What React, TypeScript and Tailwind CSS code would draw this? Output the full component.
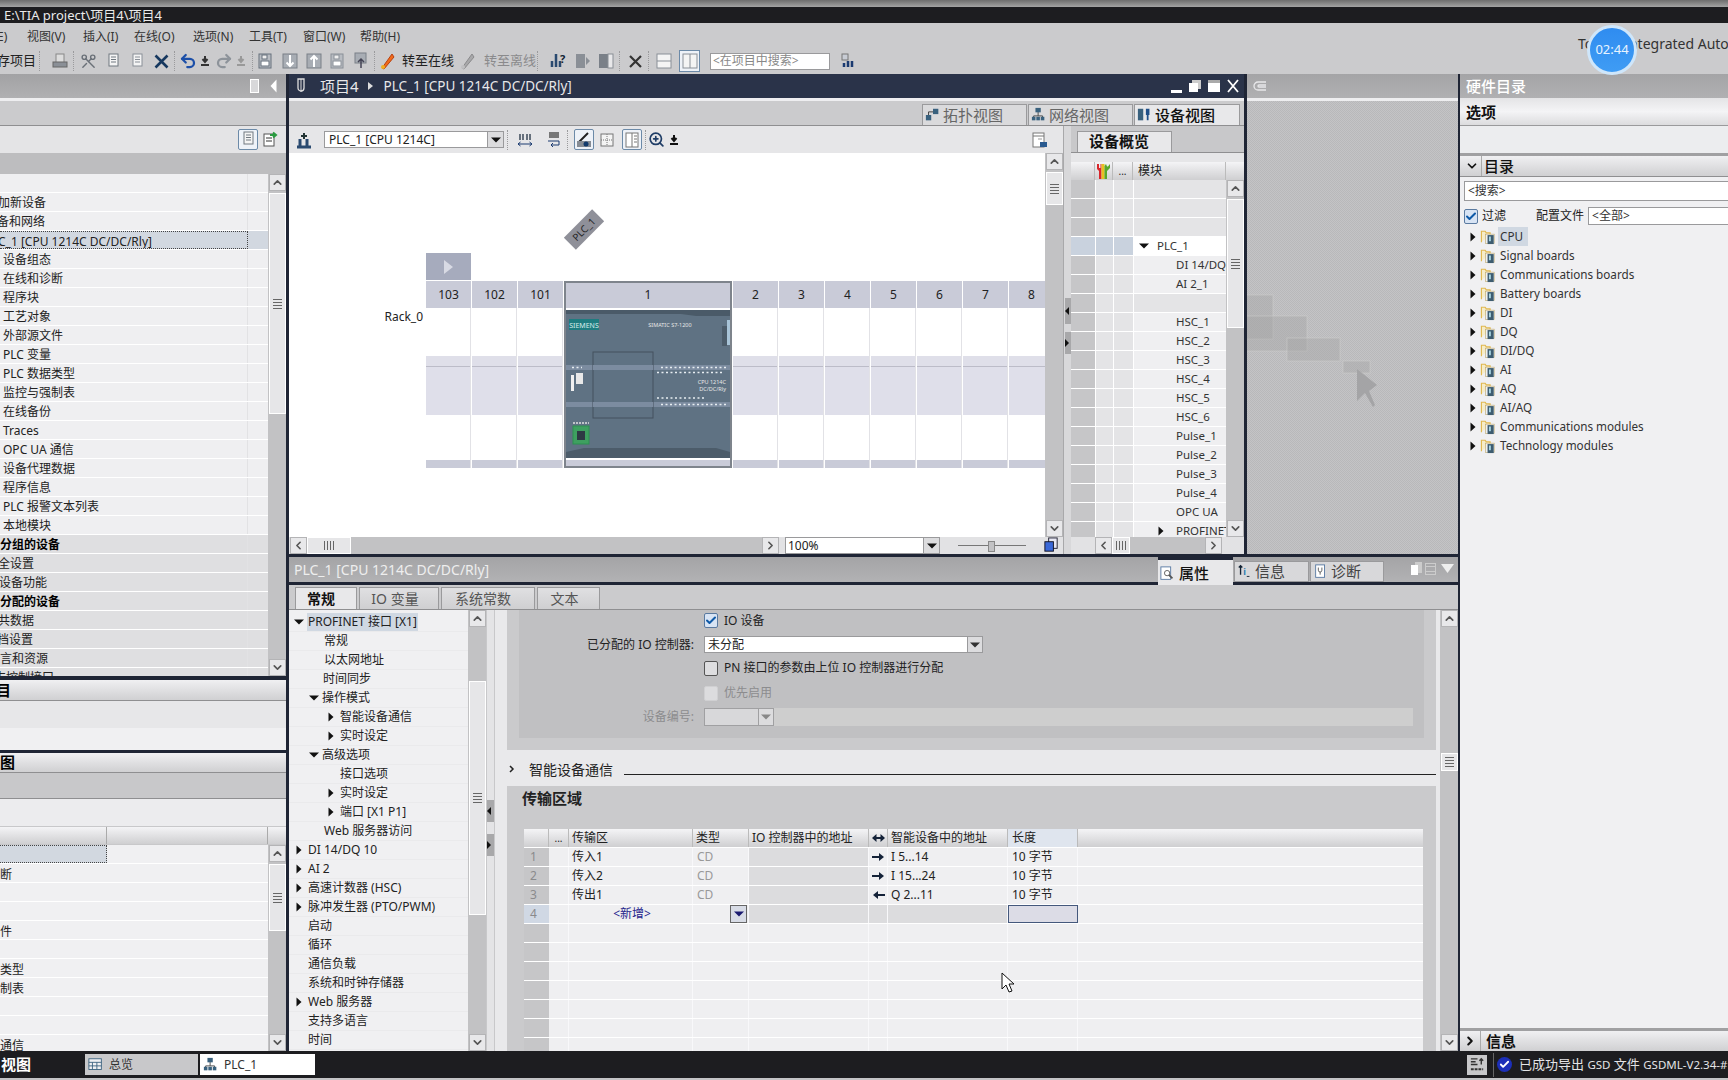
import React from "react";
import { Scissors, Undo2, Redo2, ChevronUp, ChevronDown, ChevronLeft, ChevronRight, ZoomIn, Check } from "lucide-react";

const Ico = ({ children, s = 18 }: { children: React.ReactNode; s?: number }) => (
  <svg width={s} height={s} viewBox="0 0 18 18" fill="none" className="shrink-0">{children}</svg>
);
const TriR = ({ c = "#111" }: { c?: string }) => (
  <svg width="6" height="10" viewBox="0 0 6 10" className="shrink-0"><path d="M0.5 0.5 L5.5 5 L0.5 9.5Z" fill={c} /></svg>
);
const TriD = ({ c = "#111" }: { c?: string }) => (
  <svg width="10" height="6" viewBox="0 0 10 6" className="shrink-0"><path d="M0 0.5 L10 0.5 L5 5.5Z" fill={c} /></svg>
);
const Grip = () => (
  <div className="flex flex-col gap-[2px]"><div className="w-[9px] h-px bg-[#666]" /><div className="w-[9px] h-px bg-[#666]" /><div className="w-[9px] h-px bg-[#666]" /><div className="w-[9px] h-px bg-[#666]" /></div>
);
const GripV = () => (
  <div className="flex gap-[2px]"><div className="h-[9px] w-px bg-[#666]" /><div className="h-[9px] w-px bg-[#666]" /><div className="h-[9px] w-px bg-[#666]" /><div className="h-[9px] w-px bg-[#666]" /></div>
);
const SBtn = ({ dir }: { dir: "u" | "d" | "l" | "r" }) => (
  <div className="w-[17px] h-[17px] shrink-0 bg-[#e8e8ea] border border-white outline outline-[#b4b4b6] -outline-offset-1 flex items-center justify-center text-[#555]">
    {dir === "u" && <ChevronUp size={13} strokeWidth={3} />}
    {dir === "d" && <ChevronDown size={13} strokeWidth={3} />}
    {dir === "l" && <ChevronLeft size={13} strokeWidth={3} />}
    {dir === "r" && <ChevronRight size={13} strokeWidth={3} />}
  </div>
);
const Thumb = ({ cls }: { cls: string }) => (
  <div className={`w-[17px] shrink-0 bg-[#e6e6e8] border border-white flex items-center justify-center ${cls}`}><Grip /></div>
);
const ThumbH = ({ cls }: { cls: string }) => (
  <div className={`h-[17px] shrink-0 bg-[#e6e6e8] border border-white flex items-center justify-center ${cls}`}><GripV /></div>
);
const VScroll = ({ mt, h }: { mt: string; h: string }) => (
  <div className="w-[18px] shrink-0 h-full bg-[#c2c2c4] flex flex-col items-center overflow-hidden">
    <SBtn dir="u" />
    <div className={mt} />
    <Thumb cls={h} />
    <div className="flex-1" />
    <SBtn dir="d" />
  </div>
);

const Doc = ({ c = "#707880" }: { c?: string }) => (
  <Ico><rect x="5" y="2" width="9" height="12" fill="#f4f4f4" stroke={c} /><path d="M7 5h5M7 7.5h5M7 10h5" stroke={c} /></Ico>
);
const Box = ({ c = "#66707c" }: { c?: string }) => (
  <Ico><rect x="3" y="2" width="12" height="14" fill="#b8bcc2" stroke={c} /><rect x="5" y="9" width="8" height="5" fill="#fff" stroke={c} /><rect x="6" y="3" width="5" height="4" fill="#eee" stroke={c} /></Ico>
);
const ArrowBox = ({ up }: { up?: boolean }) => (
  <Ico><rect x="2" y="2" width="14" height="14" fill="#a8adb4" stroke="#7a8088" /><path d={up ? "M9 15V4M5.5 7.5 9 4l3.5 3.5" : "M9 3v11M5.5 10.5 9 14l3.5-3.5"} stroke="#fff" strokeWidth="2" /></Ico>
);
const T = ({ c = "", children }: { c?: string; children: React.ReactNode }) => (
  <div className={`w-[20px] h-[20px] shrink-0 flex items-center justify-center ${c}`}>{children}</div>
);
const Sep = () => <div className="w-px h-[20px] ml-[3px] -mr-[4px] shrink-0 border-l border-dotted border-[#9a9a9c]" />;

const Folder = () => (
  <Ico s={17}>
    <path d="M1.5 15V3.5h4l1.2 1.6h4v2" stroke="#e0b850" strokeWidth="1.2" fill="#f6ecc8" />
    <rect x="6" y="6.5" width="9" height="10" fill="#f0f0f0" stroke="#b8a060" strokeWidth=".6" />
    <rect x="8" y="7.5" width="6.5" height="9.5" fill="#3d5c70" />
    <rect x="9.5" y="9" width="2" height="5" fill="#a8d4e0" />
  </Ico>
);
const Cb = ({ on, dis }: { on?: boolean; dis?: boolean }) => (
  <div className={`w-[14px] h-[15px] shrink-0 rounded-[2px] border flex items-center justify-center ${on ? "bg-[#d8e4f4] border-[#5a7aa0]" : dis ? "bg-[#dcdcde] border-[#d0d0d2]" : "bg-[#dedee0] border-[#555]"}`}>
    {on && <Check size={13} strokeWidth={4} className="text-[#0f5aa8]" />}
  </div>
);
const BoldArrow = ({ d }: { d: "r" | "l" | "b" }) => (
  <svg width="13" height="10" viewBox="0 0 13 10" className="shrink-0">
    {d === "r" && <path d="M0 4h7V1l5 4-5 4V6H0z" fill="#142238" />}
    {d === "l" && <path d="M13 4H6V1L1 5l5 4V6h7z" fill="#142238" />}
    {d === "b" && <path d="M0 5l4.500-4v3h4V1L13 5 8.500 9V6h-4v3z" fill="#142238" />}
  </svg>
);

const leftRows: [string, string, string?][] = [
  ["", "ml-0"], ["加新设备", "-ml-[2px]"], ["备和网络", "-ml-[3px]"], ["C_1 [CPU 1214C DC/DC/Rly]", "-ml-[2px]", "sel"],
  ["设备组态", "ml-[3px]"], ["在线和诊断", "ml-[3px]"], ["程序块", "ml-[3px]"], ["工艺对象", "ml-[3px]"], ["外部源文件", "ml-[3px]"],
  ["PLC 变量", "ml-[3px]"], ["PLC 数据类型", "ml-[3px]"], ["监控与强制表", "ml-[3px]"], ["在线备份", "ml-[3px]"], ["Traces", "ml-[3px]"],
  ["OPC UA 通信", "ml-[3px]"], ["设备代理数据", "ml-[3px]"], ["程序信息", "ml-[3px]"], ["PLC 报警文本列表", "ml-[3px]"], ["本地模块", "ml-[3px]"],
  ["分组的设备", "ml-0", "b"], ["全设置", "-ml-[2px]", "g"], ["设备功能", "-ml-[1px]", "g"], ["分配的设备", "ml-0", "b"], ["共数据", "-ml-[2px]", "g"], ["档设置", "-ml-[3px]", "g"], ["言和资源", "ml-0", "g"], ["支控制接口", "-ml-[6px]", "g"],
];
const detailRows = ["", "断", "", "", "件", "", "类型", "制表", "", "", "通信"];

const LeftPanel = () => (
  <div className="w-[286px] shrink-0 h-full flex flex-col overflow-hidden">
    <div className="h-[24px] shrink-0 bg-gradient-to-b from-[#a2a2a4] to-[#b0b0b2] flex items-center justify-end gap-[11px] pr-[9px]">
      <div className="w-[9px] h-[14px] bg-[#d8d8da] border border-white" />
      <svg width="7" height="14" viewBox="0 0 7 14"><path d="M6.5 0.5 L0.5 7 L6.5 13.5Z" fill="#fff" /></svg>
    </div>
    <div className="h-[3px] shrink-0 bg-[#eeeef0]" />
    <div className="h-[25px] shrink-0 bg-[#cbcbcd] border-b border-[#8f8f91]" />
    <div className="h-[27px] shrink-0 bg-[#e4e4e6] flex items-center justify-end gap-[3px] pr-[7px] pb-px">
      <div className="w-[20px] h-[21px] bg-[#eef2f8] border border-[#6c8aa8] rounded-[2px] flex items-center justify-center"><Doc /></div>
      <Ico><rect x="3" y="4" width="10" height="12" fill="#fff" stroke="#555" /><path d="M5 8h6M5 11h6" stroke="#333" /><path d="M9 5 14 5M12 2.5 15 5 12 7.5" stroke="#2a9a40" strokeWidth="2" /></Ico>
    </div>
    <div className="h-[21px] shrink-0 bg-[#bdbdbf]" />
    <div className="h-[502px] shrink-0 flex">
      <div className="flex-1 min-w-0 flex flex-col overflow-hidden">
        {leftRows.map(([t, ml, k], i) => (
          <div key={i} className={`h-[19px] shrink-0 flex border-b border-white ${k === "sel" ? "bg-[#d2d8e0]" : k === "b" || k === "g" ? "bg-[#dfdfe1]" : "bg-[#efeff1]"}`}>
            <div className={`w-[248px] shrink-0 overflow-hidden whitespace-nowrap leading-[20px] text-[12px] text-[#222] ${k === "b" ? "font-bold text-black" : ""} ${k === "sel" ? "border-y border-r border-dotted border-[#444]" : "border-r border-[#e2e2e4]"}`}>
              <span className={`inline-block ${ml}`}>{t}</span>
            </div>
          </div>
        ))}
      </div>
      <VScroll mt="h-[2px]" h="h-[221px]" />
    </div>
    <div className="h-[4px] shrink-0 bg-[#1f2535]" />
    <div className="h-[21px] shrink-0 bg-gradient-to-b from-[#f0f0f2] to-[#d0d0d2] border-b border-[#8f8f91] text-[15px] font-bold leading-[20px] overflow-hidden"><span className="inline-block -ml-[4px]">目</span></div>
    <div className="h-[27px] shrink-0 bg-[#e7e7e9]" />
    <div className="h-[22px] shrink-0 bg-[#f0f0f2]" />
    <div className="h-[3px] shrink-0 bg-[#1f2535]" />
    <div className="h-[20px] shrink-0 bg-gradient-to-b from-[#f0f0f2] to-[#d0d0d2] border-b border-[#8f8f91] text-[15px] font-bold leading-[19px] overflow-hidden">图</div>
    <div className="h-[26px] shrink-0 bg-[#c8c8ca] border-b border-[#8f8f91]" />
    <div className="h-[27px] shrink-0 bg-[#ececee]" />
    <div className="h-[19px] shrink-0 grid grid-cols-[107px_161px_18px] bg-gradient-to-b from-[#f4f4f6] to-[#cfcfd1] border-y border-[#c8c8ca]">
      <div className="border-r border-[#aaa]" /><div className="border-r border-[#aaa]" /><div />
    </div>
    <div className="flex-1 min-h-0 flex">
      <div className="flex-1 min-w-0 flex flex-col overflow-hidden">
        {detailRows.map((t, i) => (
          <div key={i} className="h-[19px] shrink-0 bg-[#f0f0f2] border-b border-white text-[12px] leading-[22px] text-[#222] whitespace-nowrap">
            <div className={`w-[107px] h-full pl-0 ${i === 0 ? "bg-[#d2d8e0] border-y border-r border-dotted border-[#444]" : ""}`}>{t}</div>
          </div>
        ))}
      </div>
      <VScroll mt="h-[2px]" h="h-[67px]" />
    </div>
  </div>
);

const Slot = ({ n, w, sel }: { n: string; w: string; sel?: boolean }) => (
  <div className={`${w} shrink-0 flex flex-col ${sel ? "outline-2 outline-[#7e848c] -outline-offset-2 px-[2px]" : ""}`}>
    <div className="h-[27px] bg-[#c9cbd8] flex items-center justify-center text-[12px] text-[#222]">{n}</div>
    {sel ? (
      <div className="h-[160px] flex flex-col">
        <div className="h-[2px] bg-white shrink-0" />
        <svg width="164" height="148" viewBox="0 0 164 148" className="shrink-0">
          <rect width="164" height="148" fill="#5f7283" />
          <path d="M0 0H164V6H130L115 4H0Z" fill="#4a5a68" />
          <path d="M0 148V142L18 138 150 138 164 142V148Z" fill="#4c5c6a" />
          <rect x="3" y="9" width="30" height="11" fill="#1f7c80" />
          <text x="18" y="17.5" textAnchor="middle" fontSize="7" fill="#d8ecec">SIEMENS</text>
          <text x="104" y="17" textAnchor="middle" fontSize="5.5" fill="#e8e8e8">SIMATIC S7-1200</text>
          <rect x="161" y="10" width="3" height="25" fill="#a8c4d8" />
          <rect x="156" y="16" width="5" height="20" fill="#4c5c6a" />
          <rect x="0" y="55" width="164" height="5" fill="#7c8ca0" />
          <rect x="0" y="92" width="164" height="5" fill="#7c8ca0" />
          <rect x="27" y="42" width="60" height="66" fill="#5f7283" stroke="#44515e" />
          <rect x="27" y="55" width="60" height="5" fill="#7c8ca0" />
          <rect x="27" y="92" width="60" height="5" fill="#7c8ca0" />
          <path d="M95 57.5H160M91 62.500H158M91 88H140M95 94.500H160M6 57.500H16" stroke="#e8eef2" strokeWidth="1.5" strokeDasharray="2 2.5" />
          <rect x="5" y="65" width="3" height="16" fill="#f0f0f0" />
          <rect x="10" y="63" width="7" height="11" fill="#e8e8e8" />
          <text x="160" y="74" textAnchor="end" fontSize="5.5" fill="#e8e8e8">CPU 1214C</text>
          <text x="160" y="81" textAnchor="end" fontSize="5.5" fill="#e8e8e8">DC/DC/Rly</text>
          <rect x="7" y="116" width="16" height="18" fill="#3ea060" stroke="#2c9050" />
          <rect x="11" y="121" width="8" height="9" fill="#2e3a44" />
          <path d="M7 113h16" stroke="#e0e0e0" strokeWidth="1.5" strokeDasharray="2 1" />
        </svg>
        <div className="h-[2px] bg-white shrink-0" />
        <div className="h-[8px] bg-[#c9cbd8] shrink-0" />
      </div>
    ) : (
      <div className="h-[160px] flex flex-col border-r border-[#e2e2e6]">
        <div className="h-[48px] bg-white shrink-0" />
        <div className="h-[11px] bg-[#dfdfe9] shrink-0 border-b border-[#bcbcc8]" />
        <div className="h-[48px] bg-[#dfdfea] shrink-0" />
        <div className="h-[45px] bg-white shrink-0" />
        <div className="h-[8px] bg-[#c9cbd8] shrink-0" />
      </div>
    )}
  </div>
);

const Canvas = () => (
  <div className="flex-1 min-w-0 h-full bg-white flex relative overflow-hidden">
    <div className="w-[134px] shrink-0 pt-[155px] text-right text-[12px] text-[#222] leading-[18px]">Rack_0</div>
    <div className="ml-[3px] pt-[100px] flex flex-col">
      <div className="w-[45px] h-[27px] bg-[#a6abbd] shrink-0 flex items-center justify-center mb-px">
        <svg width="9" height="14" viewBox="0 0 9 14"><path d="M0 0 L9 7 L0 14Z" fill="#d8dae4" /></svg>
      </div>
      <div className="flex gap-px">
        <Slot n="103" w="w-[45px]" />
        <Slot n="102" w="w-[45px]" />
        <Slot n="101" w="w-[45px]" />
        <Slot n="1" w="w-[168px]" sel />
        {["2", "3", "4", "5", "6", "7"].map((n) => <Slot key={n} n={n} w="w-[45px]" />)}
        <Slot n="8" w="w-[45px]" />
      </div>
    </div>
    <div className="absolute left-[275px] top-[68px] w-[40px] h-[17px] bg-[#8f9099] -rotate-45 flex items-center justify-center text-[10px] text-[#222]">PLC_1</div>
  </div>
);

const ovRows: [string, string?][] = [["", ""], ["", ""], ["", ""], ["PLC_1", "p"], ["DI 14/DQ"], ["AI 2_1"], ["", "e"], ["HSC_1"], ["HSC_2"], ["HSC_3"], ["HSC_4"], ["HSC_5"], ["HSC_6"], ["Pulse_1"], ["Pulse_2"], ["Pulse_3"], ["Pulse_4"], ["OPC UA"], ["PROFINET", "a"]];

const Overview = () => (
  <div className="w-[181px] shrink-0 h-full flex bg-[#e2e2e4]">
    <div className="w-[8px] shrink-0 bg-[#d8d8da] border-l border-[#a8a8aa] flex flex-col items-center pt-[172px]">
      <div className="w-[6px] h-[26px] bg-[#a8a8aa] flex items-center"><svg width="4" height="8" viewBox="0 0 4 8"><path d="M4 0 L0 4 L4 8Z" fill="#111" /></svg></div>
      <div className="w-[6px] h-[8px]" />
      <div className="w-[6px] h-[22px] bg-[#a8a8aa] flex items-center"><svg width="4" height="8" viewBox="0 0 4 8"><path d="M0 0 L4 4 L0 8Z" fill="#111" /></svg></div>
    </div>
    <div className="flex-1 min-w-0 h-full flex flex-col">
      <div className="h-[27px] shrink-0 bg-[#c8c8ca] border-b border-[#8f8f91] pt-[5px] pl-[6px]">
        <div className="w-[95px] h-[21px] bg-[#e8e8ea] border-t border-x border-[#9a9a9c] flex items-center pl-[11px] pb-[2px] text-[15px] font-bold text-[#111] leading-none">设备概览</div>
      </div>
      <div className="h-[9px] shrink-0 bg-[#e6e6e8]" />
      <div className="h-[18px] shrink-0 grid grid-cols-[24px_18px_20px_93px_18px] bg-gradient-to-b from-[#f4f4f6] to-[#cfcfd1] text-[12px] leading-[18px] text-[#222]">
        <div className="border-r border-[#bbb]" />
        <div className="border-r border-[#bbb] flex justify-center items-center">
          <svg width="15" height="17" viewBox="0 0 15 17"><path d="M1 1v5l2 2v8h2.500V1H4.500v4H3V1z" fill="#d8262c" /><path d="M5.500 1h3v15h-3z" fill="#e8c020" /><path d="M8.500 3v13h2.500V8l3-3V1l-2 2.500h-1L10 1z" fill="#58a82c" /></svg>
        </div>
        <div className="border-r border-[#bbb] text-center text-[10px]">...</div>
        <div className="pl-[5px] border-r border-[#bbb] overflow-hidden">模块</div>
        <div />
      </div>
      <div className="flex-1 min-h-0 flex overflow-hidden">
        <div className="w-[155px] shrink-0 flex flex-col overflow-hidden">
          {ovRows.map(([t, k], i) => (
            <div key={i} className="h-[19px] shrink-0 grid grid-cols-[24px_18px_20px_93px] text-[11.5px] leading-[18px] text-[#333] border-b border-white">
              <div className={k === "p" ? "bg-[#c9d2de]" : "bg-[#c6c6c8]"} />
              <div className={`border-l border-white ${k === "p" ? "bg-[#c9d2de]" : "bg-[#e4e4e6]"}`} />
              <div className={`border-l border-white ${k === "p" ? "bg-[#c9d2de]" : "bg-[#e4e4e6]"}`} />
              {k === "p" ? (
                <div className="bg-white border-l border-white flex items-center pl-[5px] gap-[8px] whitespace-nowrap"><TriD />{t}</div>
              ) : k === "e" ? (
                <div className="bg-[#e4e4e6] border-l border-white" />
              ) : (
                <div className={`${i < 3 ? "bg-[#e4e4e6]" : "bg-[#efeff1]"} border-l border-white whitespace-nowrap overflow-hidden flex items-center pl-[42px] relative`}>
                  {k === "a" && <span className="absolute left-[24px] top-[4px]"><TriR /></span>}
                  {t}
                </div>
              )}
            </div>
          ))}
        </div>
        <VScroll mt="h-[2px]" h="h-[129px]" />
      </div>
      <div className="h-[17px] shrink-0 flex bg-[#e2e2e4]">
        <div className="w-[24px] shrink-0" />
        <SBtn dir="l" />
        <ThumbH cls="w-[18px]" />
        <div className="w-[75px] bg-[#c2c2c4]" />
        <SBtn dir="r" />
      </div>
    </div>
  </div>
);

const EditorToolbar = () => (
  <div className="h-[27px] shrink-0 bg-[#e6e6e8] flex items-center pl-[5px]">
    <T><Ico><path d="M5 8v8M12 8v8M2 16h14" stroke="#2a4a70" strokeWidth="3" /><path d="M9 2v6M6 5h6" stroke="#233" strokeWidth="2" /></Ico></T>
    <div className="ml-[10px] w-[180px] h-[17px] bg-white border border-[#9a9a9c] flex items-center justify-between text-[12px] pl-[4px] text-[#222]">
      <span>PLC_1 [CPU 1214C]</span>
      <div className="w-[16px] h-full bg-[#dcdcde] border-l border-[#9a9a9c] flex items-center justify-center"><TriD /></div>
    </div>
    <Sep />
    <T c="ml-[11px]"><Ico><path d="M4 3v6M7 3v6M11 3v6M14 3v6" stroke="#66707c" strokeWidth="2" /><path d="M2 13h14M4.5 11 2 13l2.5 2M13.5 11 16 13l-2.5 2" stroke="#1a3a70" /></Ico></T>
    <T c="ml-[9px]"><Ico><rect x="4" y="1" width="10" height="6" fill="#777" /><path d="M3 10h11v4H7M8 12l-2 2 2 2" stroke="#1a3a70" fill="none" /></Ico></T>
    <Sep />
    <T c="ml-[10px] bg-[#eef2f8] border border-[#6c8aa8] rounded-[2px] h-[21px]"><Ico><path d="M4 11 13 2" stroke="#222" strokeWidth="2" /><rect x="2" y="10" width="14" height="6" fill="#868c94" /><circle cx="11" cy="13" r="2.5" fill="#123a6c" /></Ico></T>
    <T c="ml-[3px]"><Ico><rect x="3" y="3" width="12" height="12" fill="#f4f4f4" stroke="#777" /><path d="M3 9h12M9 3v12" stroke="#777" strokeDasharray="1 1" /></Ico></T>
    <T c="ml-[5px] bg-[#eef2f8] border border-[#6c8aa8] rounded-[2px] h-[21px]"><Ico><rect x="3" y="2" width="12" height="14" fill="#fff" stroke="#777" /><path d="M9 2v14M11 5h3M11 8h3M11 11h3" stroke="#777" /></Ico></T>
    <Sep />
    <T c="ml-[4px]"><ZoomIn size={17} strokeWidth={2.4} className="text-[#1f3d66]" /></T>
    <div className="ml-[4px] flex flex-col items-center"><svg width="8" height="10" viewBox="0 0 8 10"><path d="M4 0v5M1.500 3 4 6 6.500 3M0 9h8" stroke="#111" strokeWidth="2" fill="none" /></svg></div>
    <div className="flex-1" />
    <T c="mr-[14px]"><Ico><rect x="3" y="2" width="11" height="14" fill="#fff" stroke="#777" /><path d="M3 5h11" stroke="#777" /><path d="M8 8h4" stroke="#999" /><rect x="10" y="11" width="7" height="5" fill="#2a5a90" /></Ico></T>
  </div>
);

const Tab = ({ w, active, icon, t }: { w: string; active?: boolean; icon: React.ReactNode; t: string }) => (
  <div className={`${w} h-[21px] shrink-0 border-t border-x border-[#9a9a9c] flex items-center pl-[2px] gap-[2px] text-[15px] leading-none ${active ? "bg-[#e8e8ea] text-[#111] font-medium" : "bg-[#dadadc] text-[#666]"}`}>{icon}{t}</div>
);

const Editor = () => (
  <div className="w-[955px] shrink-0 h-full flex flex-col">
    <div className="h-[24px] shrink-0 bg-[#2a3349] flex items-center text-[13.5px] text-[#e8e8ea]">
      <svg width="10" height="16" viewBox="0 0 10 16" className="ml-[7px]"><path d="M2 1h6v9a3 3 0 0 1-6 0z" fill="none" stroke="#ddd" strokeWidth="1.3" /><path d="M5 1v13" stroke="#ddd" /></svg>
      <span className="ml-[14px] text-[15px]">项目4</span>
      <svg width="5" height="8" viewBox="0 0 5 8" className="ml-[9px]"><path d="M0 0 L5 4 L0 8Z" fill="#ddd" /></svg>
      <span className="ml-[11px] whitespace-nowrap">PLC_1 [CPU 1214C DC/DC/Rly]</span>
      <div className="flex-1" />
      <div className="flex items-center gap-[7px] pr-[5px]">
        <div className="w-[11px] h-[3px] bg-white mt-[10px]" />
        <svg width="12" height="12" viewBox="0 0 12 12"><rect x="3" y="0" width="9" height="9" fill="#ccc" /><rect x="0" y="3" width="9" height="9" fill="#fff" /></svg>
        <div className="w-[12px] h-[12px] bg-white border-t-[3px] border-[#aaa]" />
        <svg width="12" height="14" viewBox="0 0 12 14"><path d="M1 1 11 13M11 1 1 13" stroke="#fff" strokeWidth="1.8" /></svg>
      </div>
    </div>
    <div className="h-[3px] shrink-0 bg-[#eeeef0]" />
    <div className="h-[25px] shrink-0 bg-[#cbcbcd] border-b border-[#8f8f91] flex items-end justify-end pr-[4px] gap-px">
      <Tab w="w-[105px]" t="拓扑视图" icon={<Ico s={16}><rect x="1" y="9" width="6" height="6" fill="#39617e" /><rect x="9" y="2" width="6" height="6" fill="#39617e" /><path d="M4 9V5.500h5" stroke="#333" /></Ico>} />
      <Tab w="w-[105px]" t="网络视图" icon={<Ico s={16}><path d="M3 14v-4h10v4M8 10V5" stroke="#444" /><rect x="5" y="1" width="6" height="5" fill="#39617e" /><rect x="1" y="11" width="4" height="4" fill="#39617e" /><rect x="6" y="11" width="4" height="4" fill="#39617e" /><rect x="11" y="11" width="4" height="4" fill="#39617e" /></Ico>} />
      <Tab w="w-[106px]" active t="设备视图" icon={<Ico s={16}><rect x="1" y="2" width="6" height="13" fill="#39617e" /><path d="M11 2v6h2V2M12 8v7" stroke="#1f4f88" strokeWidth="2" /></Ico>} />
    </div>
    <div className="flex-1 min-h-0 flex">
      <div className="w-[774px] shrink-0 h-full flex flex-col">
        <EditorToolbar />
        <div className="flex-1 min-h-0 flex">
          <Canvas />
          <VScroll mt="h-[2px]" h="h-[33px]" />
        </div>
        <div className="h-[17px] shrink-0 flex bg-[#e2e2e4]">
          <div className="w-px" />
          <SBtn dir="l" />
          <ThumbH cls="w-[44px]" />
          <div className="w-[411px] bg-[#c2c2c4]" />
          <SBtn dir="r" />
          <div className="ml-[6px] w-[155px] h-[17px] bg-white border border-[#9a9a9c] flex items-center justify-between text-[12px] pl-[2px] leading-none text-[#222]">
            100%
            <div className="w-[16px] h-full bg-[#dcdcde] border-l border-[#9a9a9c] flex items-center justify-center"><TriD /></div>
          </div>
          <div className="ml-[18px] w-[68px] h-full flex items-center justify-center relative">
            <div className="w-full h-px bg-[#777]" />
            <div className="absolute left-[30px] top-[4px] w-[7px] h-[11px] bg-[#c2c2c4] border border-[#888]" />
          </div>
          <div className="ml-[17px]"><Ico s={17}><rect x="6" y="1" width="9" height="11" fill="#e8e8f4" stroke="#223" /><rect x="2" y="5" width="9" height="10" fill="#3a68d8" stroke="#112" /></Ico></div>
        </div>
      </div>
      <Overview />
    </div>
  </div>
);

const propsTree: [string, string, string, string?][] = [
  ["d", "pl-[5px]", "PROFINET 接口 [X1]", "sel"],
  ["", "pl-[35px]", "常规"],
  ["", "pl-[35px]", "以太网地址"],
  ["", "pl-[34px]", "时间同步"],
  ["d", "pl-[20px]", "操作模式"],
  ["r", "pl-[39px]", "智能设备通信"],
  ["r", "pl-[39px]", "实时设定"],
  ["d", "pl-[20px]", "高级选项"],
  ["", "pl-[51px]", "接口选项"],
  ["r", "pl-[39px]", "实时设定"],
  ["r", "pl-[39px]", "端口 [X1 P1]"],
  ["", "pl-[35px]", "Web 服务器访问"],
  ["r", "pl-[7px]", "DI 14/DQ 10"],
  ["r", "pl-[7px]", "AI 2"],
  ["r", "pl-[7px]", "高速计数器 (HSC)"],
  ["r", "pl-[7px]", "脉冲发生器 (PTO/PWM)"],
  ["", "pl-[19px]", "启动"],
  ["", "pl-[19px]", "循环"],
  ["", "pl-[19px]", "通信负载"],
  ["", "pl-[19px]", "系统和时钟存储器"],
  ["r", "pl-[7px]", "Web 服务器"],
  ["", "pl-[19px]", "支持多语言"],
  ["", "pl-[19px]", "时间"],
];

const tableRows: [string, string, string, "r" | "l", string, string][] = [
  ["1", "传入1", "CD", "r", "I 5...14", "10 字节"],
  ["2", "传入2", "CD", "r", "I 15...24", "10 字节"],
  ["3", "传出1", "CD", "l", "Q 2...11", "10 字节"],
];
const cols = "grid grid-cols-[25px_20px_124px_56px_120px_19px_120px_70px_1fr]";

const Properties = () => (
  <div className="flex-1 min-h-0 flex flex-col">
    <div className="h-[28px] shrink-0 bg-gradient-to-b from-[#a4a4a6] to-[#b2b2b4] border-b-[3px] border-[#1f2535] flex items-end text-[14px] text-[#eee]">
      <span className="ml-[5px] self-center whitespace-nowrap">PLC_1 [CPU 1214C DC/DC/Rly]</span>
      <div className="flex-1" />
      <div className="h-[28px] w-[75px] -mb-[3px] bg-[#e8e8ea] border-t-[3px] border-[#1f2535] flex items-center gap-[3px] text-[15px] font-medium text-[#111] pl-[2px] pt-[2px] relative">
        <Ico s={16}><rect x="1" y="1" width="11" height="14" fill="#fff" stroke="#5577a0" /><circle cx="8" cy="8" r="3" fill="none" stroke="#555" /><path d="M10 10l4 4" stroke="#555" strokeWidth="2" /></Ico>属性
      </div>
      <div className="h-[21px] ml-px w-[75px] bg-[#d8d8da] border border-[#9a9a9c] flex items-center gap-[2px] text-[15px] text-[#444] pl-[2px]">
        <Ico s={16}><path d="M4 2v10M2 4l2-2 2 2" stroke="#123" strokeWidth="1.500" /><text x="7" y="12" fontSize="10" fill="#2a7ab0" fontWeight="700">i</text><path d="M11 14h3" stroke="#123" /></Ico>信息
      </div>
      <div className="h-[21px] ml-px w-[74px] bg-[#d8d8da] border border-[#9a9a9c] flex items-center gap-[2px] text-[15px] text-[#444] pl-[2px]">
        <Ico s={16}><rect x="3" y="1" width="10" height="14" fill="#fff" stroke="#5577a0" /><path d="M6 4v3a2 2 0 0 0 4 0V4M8 9v3" stroke="#555" /></Ico>诊断
      </div>
      <div className="w-[74px] h-full flex items-center justify-end gap-[3px] pr-[4px] pb-[2px]">
        <svg width="11" height="13" viewBox="0 0 11 13"><rect x="4" y="0" width="7" height="11" fill="#ccc" /><rect x="0" y="3" width="7" height="10" fill="#fff" /></svg>
        <div className="w-[11px] h-[12px] border border-[#ccc] flex flex-col justify-around"><div className="h-px bg-[#ccc]" /><div className="h-px bg-[#ccc]" /></div>
        <svg width="13" height="9" viewBox="0 0 13 9" className="ml-[2px]"><path d="M0 0H13L6.500 9Z" fill="#eee" /></svg>
      </div>
    </div>
    <div className="h-[25px] shrink-0 bg-[#cbcbcd] border-b border-[#8f8f91] flex items-end pl-[6px] gap-[2px] text-[14px]">
      <div className="w-[62px] h-[22px] bg-[#e8e8ea] border-t border-x border-[#9a9a9c] flex items-center justify-center pr-[10px] font-bold text-[#111] leading-none">常规</div>
      <div className="w-[80px] h-[22px] bg-gradient-to-b from-[#e0e0e2] to-[#cfcfd1] border-t border-x border-[#9a9a9c] flex items-center justify-center pr-[8px] text-[#555] leading-none">IO 变量</div>
      <div className="w-[94px] h-[22px] bg-gradient-to-b from-[#e0e0e2] to-[#cfcfd1] border-t border-x border-[#9a9a9c] flex items-center justify-center pr-[10px] text-[#555] leading-none">系统常数</div>
      <div className="w-[63px] h-[22px] bg-gradient-to-b from-[#e0e0e2] to-[#cfcfd1] border-t border-x border-[#9a9a9c] flex items-center justify-center pr-[8px] text-[#555] leading-none">文本</div>
    </div>
    <div className="flex-1 min-h-0 flex">
      <div className="w-[179px] shrink-0 bg-[#f0f0f2] flex flex-col pt-[3px] overflow-hidden">
        {propsTree.map(([a, pl, t, k], i) => (
          <div key={i} className={`h-[19px] shrink-0 flex items-center text-[12px] text-[#222] whitespace-nowrap border-b border-[#eaeaec] ${pl}`}>
            {a === "d" && <span className="mr-[3px]"><TriD /></span>}
            {a === "r" && <span className="mr-[6px]"><TriR /></span>}
            <span className={k === "sel" ? "bg-[#d0d8e2] h-full px-px flex items-center" : ""}>{t}</span>
          </div>
        ))}
      </div>
      <VScroll mt="h-[54px]" h="h-[234px]" />
      <div className="w-[9px] shrink-0 bg-[#e4e4e6] border-x border-[#c8c8ca] flex flex-col items-start pt-[190px]">
        <div className="w-[7px] h-[22px] bg-[#a8a8aa] flex items-center"><svg width="4" height="8" viewBox="0 0 4 8"><path d="M4 0 L0 4 L4 8Z" fill="#111" /></svg></div>
        <div className="h-[12px]" />
        <div className="w-[7px] h-[22px] bg-[#a8a8aa] flex items-center"><svg width="4" height="8" viewBox="0 0 4 8"><path d="M0 0 L4 4 L0 8Z" fill="#111" /></svg></div>
      </div>
      <div className="flex-1 min-w-0 bg-[#e9e9eb] flex flex-col pl-[12px] pr-[4px] overflow-hidden">
        <div className="h-[140px] shrink-0 bg-[#cacacc] px-[12px]">
          <div className="h-[128px] bg-[#c0c0c2] flex flex-col text-[12px] text-[#222]">
            <div className="h-[19px] pt-[2px] flex items-center gap-[6px] pl-[185px] shrink-0"><Cb on /><span>IO 设备</span></div>
            <div className="mt-[7px] h-[17px] flex items-center shrink-0">
              <div className="w-[175px] text-right whitespace-nowrap">已分配的 IO 控制器:</div>
              <div className="ml-[10px] w-[279px] h-[17px] bg-white border border-[#9a9a9c] flex items-center justify-between pl-[3px]">
                未分配
                <div className="w-[15px] h-full bg-[#dcdcde] border-l border-[#9a9a9c] flex items-center justify-center"><TriD c="#333" /></div>
              </div>
            </div>
            <div className="mt-[6px] h-[18px] flex items-center gap-[6px] pl-[185px] shrink-0"><Cb /><span className="whitespace-nowrap">PN 接口的参数由上位 IO 控制器进行分配</span></div>
            <div className="mt-[7px] h-[18px] flex items-center gap-[6px] pl-[185px] shrink-0 text-[#8c8c8e]"><Cb dis /><span>优先启用</span></div>
            <div className="mt-[6px] h-[18px] flex items-center text-[#8c8c8e] shrink-0">
              <div className="w-[175px] text-right">设备编号:</div>
              <div className="ml-[10px] flex-1 mr-[11px] h-[18px] bg-[#cecece] flex">
                <div className="w-[70px] h-full bg-[#d8d8da] border border-[#a0a0a2] flex justify-end">
                  <div className="w-[15px] h-full bg-[#dcdcde] border-l border-[#a0a0a2] flex items-center justify-center"><TriD c="#888" /></div>
                </div>
              </div>
            </div>
          </div>
        </div>
        <div className="h-[36px] shrink-0 flex items-center text-[14px] text-[#222] pt-[2px]">
          <svg width="6" height="8" viewBox="0 0 6 8" className="ml-[2px]"><path d="M1 1l3 3-3 3" stroke="#222" strokeWidth="1.5" fill="none" /></svg>
          <span className="ml-[14px] whitespace-nowrap">智能设备通信</span>
          <div className="ml-[11px] flex-1 h-px bg-[#222] mt-[10px]" />
        </div>
        <div className="flex-1 min-h-0 bg-[#cacacc] flex flex-col pl-[17px] pr-[13px] overflow-hidden relative">
          <div className="h-[43px] shrink-0 pt-[2px] text-[15px] font-bold text-[#222] leading-[20px] -ml-[2px]">传输区域</div>
          <div className={`${cols} h-[19px] shrink-0 bg-gradient-to-b from-[#f4f4f6] to-[#cfcfd1] text-[12px] leading-[18px] text-[#222] border-b border-white`}>
            <div className="border-r border-[#bbb]" />
            <div className="border-r border-[#bbb] text-center text-[10px]">...</div>
            <div className="border-r border-[#bbb] pl-[3px]">传输区</div>
            <div className="border-r border-[#bbb] pl-[3px]">类型</div>
            <div className="border-r border-[#bbb] pl-[3px] whitespace-nowrap">IO 控制器中的地址</div>
            <div className="border-r border-[#bbb] flex items-center justify-center"><BoldArrow d="b" /></div>
            <div className="border-r border-[#bbb] pl-[3px] whitespace-nowrap">智能设备中的地址</div>
            <div className="border-r border-[#bbb] pl-[4px] bg-[#dfe5ee]">长度</div>
            <div />
          </div>
          {Array.from({ length: 11 }).map((_, i) => {
            const r = tableRows[i];
            return (
              <div key={i} className={`${cols} h-[19px] shrink-0 bg-[#efeff1] border-b border-white text-[12px] leading-[18px] text-[#222]`}>
                <div className={`pl-[6px] text-[#8a8a8c] ${i === 3 ? "bg-[#d0d8e4]" : "bg-[#c6c6c8]"}`}>{i < 4 ? i + 1 : ""}</div>
                <div className="border-r border-[#f8f8fa]" />
                <div className="border-r border-[#f8f8fa] pl-[3px]">{r ? r[1] : i === 3 ? <span className="block text-center text-[#24248c]">&lt;新增&gt;</span> : ""}</div>
                <div className="border-r border-[#f8f8fa] pl-[4px] text-[#999] flex justify-end">
                  {r ? <span className="w-full">{r[2]}</span> : i === 3 ? (
                    <div className="w-[17px] h-[18px] bg-[#d8dce6] border border-[#666] flex items-center justify-center mr-px"><TriD c="#1a1a70" /></div>
                  ) : null}
                </div>
                <div className={`border-r border-[#f8f8fa] ${i < 4 ? "bg-[#dcdcde]" : ""}`} />
                <div className={`border-r border-[#f8f8fa] flex items-center justify-center ${i === 3 ? "bg-[#dcdcde]" : ""}`}>{r ? <BoldArrow d={r[3]} /> : null}</div>
                <div className={`border-r border-[#f8f8fa] pl-[3px] ${i === 3 ? "bg-[#dcdcde]" : ""}`}>{r ? r[4] : ""}</div>
                <div className={`pl-[4px] whitespace-nowrap ${i === 3 ? "bg-[#dcdce6] border border-[#44587c]" : "border-r border-[#f8f8fa]"}`}>{r ? r[5] : ""}</div>
                <div />
              </div>
            );
          })}
          <svg width="14" height="21" viewBox="0 0 14 21" className="absolute left-[494px] top-[186px]">
            <path d="M1 1V17L5 13L8 20L11 19L8 12L13 12Z" fill="#fff" stroke="#111" strokeWidth="1" strokeLinejoin="round" />
          </svg>
        </div>
      </div>
      <VScroll mt="h-[126px]" h="h-[18px]" />
    </div>
  </div>
);

const catalog = ["CPU", "Signal boards", "Communications boards", "Battery boards", "DI", "DQ", "DI/DQ", "AI", "AQ", "AI/AQ", "Communications modules", "Technology modules"];

const Catalog = () => (
  <div className="w-[268px] shrink-0 h-full flex flex-col bg-[#f0f0f2] overflow-hidden">
    <div className="h-[24px] shrink-0 bg-gradient-to-b from-[#a4a4a6] to-[#b0b0b2] flex items-center pl-[6px] text-[15px] font-medium text-white">硬件目录</div>
    <div className="h-[28px] shrink-0 bg-gradient-to-b from-[#e4e4e6] via-[#f4f4f6] to-[#dcdcde] border-b border-[#9a9a9c] flex items-center pl-[6px] pt-px text-[15px] font-bold text-[#111]">选项</div>
    <div className="h-[27px] shrink-0 bg-[#ecedef]" />
    <div className="h-[3px] shrink-0 bg-[#a0a0a2]" />
    <div className="h-[21px] shrink-0 bg-gradient-to-b from-[#f0f0f2] to-[#d0d0d2] border-b border-[#8f8f91] flex items-center text-[15px] font-medium text-[#111]">
      <div className="w-[22px] h-full border-r border-[#aaa] flex items-center justify-center pl-[2px]"><ChevronDown size={14} strokeWidth={3} /></div>
      <span className="ml-[2px]">目录</span>
    </div>
    <div className="pl-[4px] pt-[4px] shrink-0">
      <div className="h-[20px] bg-white border border-[#9a9a9c] border-r-0 flex items-center pl-[3px] text-[12px] text-[#333]">&lt;搜索&gt;</div>
    </div>
    <div className="h-[18px] mt-[6px] shrink-0 flex items-center pl-[4px] text-[12px] text-[#222]">
      <Cb on />
      <span className="ml-[4px]">过滤</span>
      <span className="ml-[30px]">配置文件</span>
      <div className="ml-[4px] flex-1 h-[18px] bg-white border border-[#9a9a9c] border-r-0 pl-[3px] leading-[16px] text-[#333]">&lt;全部&gt;</div>
    </div>
    <div className="flex flex-col pt-[2px] shrink-0">
      {catalog.map((t, i) => (
        <div key={t} className="h-[19px] shrink-0 flex items-center text-[11.7px] text-[#333] whitespace-nowrap pl-[10px]">
          <TriR />
          <span className="ml-[4px]"><Folder /></span>
          <span className={`ml-[1px] h-[19px] flex items-center px-[2px] ${i === 0 ? "bg-[#d0d8e2] pr-[5px]" : ""}`}>{t}</span>
        </div>
      ))}
    </div>
    <div className="flex-1" />
    <div className="h-[3px] shrink-0 bg-[#a0a0a2]" />
    <div className="h-[20px] shrink-0 bg-gradient-to-b from-[#f0f0f2] to-[#d0d0d2] flex items-center text-[15px] font-bold text-[#111]">
      <div className="w-[21px] h-full border-r border-[#aaa] flex items-center justify-center"><ChevronRight size={14} strokeWidth={3.5} /></div>
      <span className="ml-[5px]">信息</span>
    </div>
  </div>
);

const Dither = () => (
  <div className="w-[211px] shrink-0 h-full flex flex-col">
    <div className="h-[24px] shrink-0 bg-gradient-to-b from-[#a4a4a6] to-[#b0b0b2] flex items-center pl-[6px]">
      <svg width="14" height="10" viewBox="0 0 14 10"><path d="M13 1H5a4 4 0 0 0 0 8h8M13 4H6a1 1 0 0 0 0 2h7" fill="none" stroke="#e8e8ea" strokeWidth="1.3" /></svg>
    </div>
    <div className="h-[3px] shrink-0 bg-[#eeeef0]" />
    <div className="flex-1 min-h-0 bg-[conic-gradient(#c4c4c6_25%,#b8b8ba_0_50%,#c4c4c6_0_75%,#b8b8ba_0)] bg-[length:2px_2px]">
      <svg width="211" height="352" viewBox="0 0 211 352" className="block">
        <g fill="#a4a4a6" fillOpacity=".4" stroke="#d0d0d2" strokeOpacity=".5">
          <rect x="-2" y="194" width="28" height="44" />
          <rect x="-2" y="215" width="62" height="35" />
          <rect x="40" y="237" width="53" height="23" />
          <rect x="96" y="260" width="27" height="12" />
        </g>
        <path d="M110 268 V300 L118 292 L126 306 L128 304 L122 290 L130 284Z" fill="#a4a4a6" />
      </svg>
    </div>
  </div>
);

export default function App() {
  return (
    <div className="w-[1728px] h-[1080px] overflow-hidden flex flex-col bg-[#cbcbcd] font-['Noto_Sans','Noto_Sans_CJK_SC',sans-serif]">
      <div className="h-[7px] shrink-0 bg-gradient-to-b from-[#6e6e6e] to-[#a4a4a4]" />
      <div className="h-[16px] shrink-0 bg-[#1d1d20] flex items-center pl-[4px] text-[13px] text-[#eaeaea] leading-none whitespace-nowrap">E:\TIA project\项目4\项目4</div>
      <div className="h-[51px] shrink-0 bg-[#cbcbcd] flex flex-col relative">
        <div className="h-[25px] shrink-0 flex items-center text-[12px] text-[#333] whitespace-nowrap pt-[3px]">
          <span className="-ml-[3px] w-[30px]">E)</span>
          <span className="w-[56px]">视图(V)</span>
          <span className="w-[51px]">插入(I)</span>
          <span className="w-[59px]">在线(O)</span>
          <span className="w-[56px]">选项(N)</span>
          <span className="w-[54px]">工具(T)</span>
          <span className="w-[57px]">窗口(W)</span>
          <span>帮助(H)</span>
        </div>
        <div className="h-[26px] shrink-0 flex items-center text-[13px] text-[#222] whitespace-nowrap">
          <span className="-ml-[3px] w-[39px] shrink-0">存项目</span>
          <Sep />
          <T c="ml-[14px]"><Ico><rect x="5" y="2" width="8" height="9" fill="#ddd" stroke="#888" /><rect x="2" y="10" width="14" height="5" fill="#8a8f96" stroke="#666" /></Ico></T>
          <Sep />
          <T c="ml-[8px]"><Scissors size={17} className="text-[#6a7078] rotate-90" /></T>
          <T c="ml-[5px]"><Doc /></T>
          <T c="ml-[4px]"><Doc c="#8a9098" /></T>
          <T c="ml-[4px]"><svg width="15" height="15" viewBox="0 0 15 15"><path d="M1.500 1.500 13.500 13.500M13.500 1.500 1.500 13.500" stroke="#16385f" strokeWidth="2.600" /></svg></T>
          <Sep />
          <T c="ml-[8px] !w-[18px]"><Undo2 size={18} strokeWidth={3} className="text-[#1c4fa8]" /></T>
          <T c="!w-[16px]"><svg width="8" height="10" viewBox="0 0 8 10"><path d="M4 0v5M1.500 3 4 6 6.500 3M0 9h8" stroke="#333" strokeWidth="2" fill="none" /></svg></T>
          <T c="ml-[2px] !w-[18px]"><Redo2 size={18} strokeWidth={3} className="text-[#8d939a]" /></T>
          <T c="!w-[16px]"><svg width="8" height="10" viewBox="0 0 8 10"><path d="M4 0v5M1.500 3 4 6 6.500 3M0 9h8" stroke="#999" strokeWidth="2" fill="none" /></svg></T>
          <Sep />
          <T c="ml-[6px]"><Box /></T>
          <T c="ml-[5px]"><ArrowBox /></T>
          <T c="ml-[4px]"><ArrowBox up /></T>
          <T c="ml-[3px]"><Box c="#8a9098" /></T>
          <T c="ml-[4px]"><Ico><rect x="3" y="1" width="11" height="10" fill="#a8adb4" stroke="#7a8088" /><path d="M9 16V7M6 10l3-3 3 3" stroke="#445" strokeWidth="1.500" /></Ico></T>
          <Sep />
          <T c="ml-[7px]"><Ico><path d="M3 16 13 2l2 3L5 17Z" fill="#f06a1a" stroke="#b84010" /><circle cx="4" cy="15" r="2" fill="#f0b020" /></Ico></T>
          <span className="ml-[4px] w-[51px] shrink-0">转至在线</span>
          <T c="ml-[5px]"><Ico><path d="M3 16 13 2l2 3L5 17Z" fill="#a8a8aa" stroke="#8a8a8c" /><circle cx="4" cy="15" r="2" fill="#c0c0c2" /></Ico></T>
          <span className="ml-[6px] w-[50px] shrink-0 text-[#8a8a8c]">转至离线</span>
          <Sep />
          <T c="ml-[14px]"><Ico><path d="M7 2v7M3 9v6M7 9v6M11 9v6" stroke="#2a4a70" strokeWidth="2.500" /><text x="11" y="11" fontSize="11" fontWeight="700" fill="#123">?</text></Ico></T>
          <T c="ml-[5px]"><Ico><rect x="2" y="2" width="9" height="14" fill="#8a8f96" /><path d="M12 5v8l4-4z" fill="#8a8f96" /></Ico></T>
          <T c="ml-[3px]"><Ico><rect x="2" y="2" width="9" height="14" fill="#7a8088" /><rect x="11" y="2" width="5" height="14" fill="#e8e8ea" stroke="#8a8f96" /></Ico></T>
          <Sep />
          <T c="ml-[9px]"><svg width="13" height="13" viewBox="0 0 13 13"><path d="M1 1l11 11M12 1 1 12" stroke="#333" strokeWidth="2.200" /></svg></T>
          <Sep />
          <T c="ml-[9px]"><Ico><rect x="2" y="2" width="14" height="14" fill="#f4f4f4" stroke="#8a9098" /><path d="M2 9h14" stroke="#8a9098" /></Ico></T>
          <T c="ml-[5px] bg-[#eef2f8] border border-[#6c8aa8] !h-[22px] !w-[21px]"><Ico><rect x="2" y="2" width="14" height="14" fill="#f4f4f4" stroke="#8a9098" /><path d="M9 2v14" stroke="#8a9098" /></Ico></T>
          <div className="ml-[10px] w-[120px] h-[17px] shrink-0 bg-white border border-[#9a9a9c] flex items-center pl-[2px] text-[12px] text-[#888]">&lt;在项目中搜索&gt;</div>
          <T c="ml-[8px]"><Ico><rect x="3" y="2" width="6" height="6" fill="#c8ccd4" stroke="#777" /><path d="M9 9v6M13 9v6M5 11v4" stroke="#1a3a70" strokeWidth="2.500" /></Ico></T>
        </div>
        <div className="absolute left-[1578px] top-[10px] text-[14px] text-[#333] whitespace-nowrap">Totally Integrated Automation</div>
        <div className="absolute left-[1587px] top-[2px] w-[50px] h-[50px] rounded-full bg-gradient-to-b from-[#2f8cf0] to-[#3f9cf4] border-[3px] border-[#cfe6fa] flex items-center justify-center text-[13px] text-[#e8f4ff]">02:44</div>
      </div>
      <div className="flex-1 min-h-0 flex bg-[#1f2535]">
        <LeftPanel />
        <div className="w-[3px] shrink-0" />
        <div className="w-[1169px] shrink-0 h-full flex flex-col">
          <div className="h-[480px] shrink-0 flex">
            <Editor />
            <div className="w-[3px] shrink-0" />
            <Dither />
          </div>
          <div className="h-[3px] shrink-0" />
          <Properties />
        </div>
        <div className="w-[2px] shrink-0" />
        <Catalog />
      </div>
      <div className="h-[27px] shrink-0 bg-[#1d1d20] flex items-center text-white whitespace-nowrap">
        <span className="w-[85px] shrink-0 text-[15px] font-bold pl-px">视图</span>
        <div className="w-[113px] h-[21px] shrink-0 bg-[#c8c8ca] flex items-center pl-[3px] gap-[5px] text-[12px] text-[#333]">
          <Ico s={16}><rect x="1" y="2" width="14" height="12" fill="#f0f0f2" stroke="#39617e" /><path d="M1 6h14M5 6v8M10 6v8M1 10h14" stroke="#39617e" /></Ico>总览
        </div>
        <div className="ml-[2px] w-[115px] h-[21px] shrink-0 bg-white flex items-center pl-[3px] gap-[5px] text-[12px] text-[#333]">
          <Ico s={16}><path d="M3 14v-4h10v4M8 10V5" stroke="#444" /><rect x="5" y="1" width="6" height="5" fill="#39617e" /><rect x="1" y="11" width="4" height="4" fill="#39617e" /><rect x="6" y="11" width="4" height="4" fill="#39617e" /><rect x="11" y="11" width="4" height="4" fill="#39617e" /></Ico>PLC_1
        </div>
        <div className="flex-1" />
        <div className="w-[20px] h-[20px] shrink-0 bg-[#c8c8ca] flex items-center justify-center"><Ico s={17}><path d="M2 3h7M2 6h5M2 9h7" stroke="#333" strokeWidth="1.500" /><path d="M13 9V3M11 5l2-2 2 2" stroke="#333" strokeWidth="1.500" fill="none" /><path d="M2 14h13" stroke="#333" strokeWidth="2" strokeDasharray="3 1" /></Ico></div>
        <div className="ml-[6px] h-[24px] w-px bg-[#666]" />
        <div className="ml-[3px] w-[15px] h-[15px] rounded-full bg-[#1c2fb8] flex items-center justify-center"><Check size={11} strokeWidth={4} className="text-white" /></div>
        <div className="ml-[7px] w-[209px] shrink-0 overflow-hidden text-[13px] text-[#e4e4e6]">已成功导出 <span className="text-[11.5px]">GSD</span> 文件 <span className="text-[11.5px]">GSDML-V2.34-#</span></div>
      </div>
      <div className="h-[2px] shrink-0 bg-[#c4c4c6]" />
    </div>
  );
}
